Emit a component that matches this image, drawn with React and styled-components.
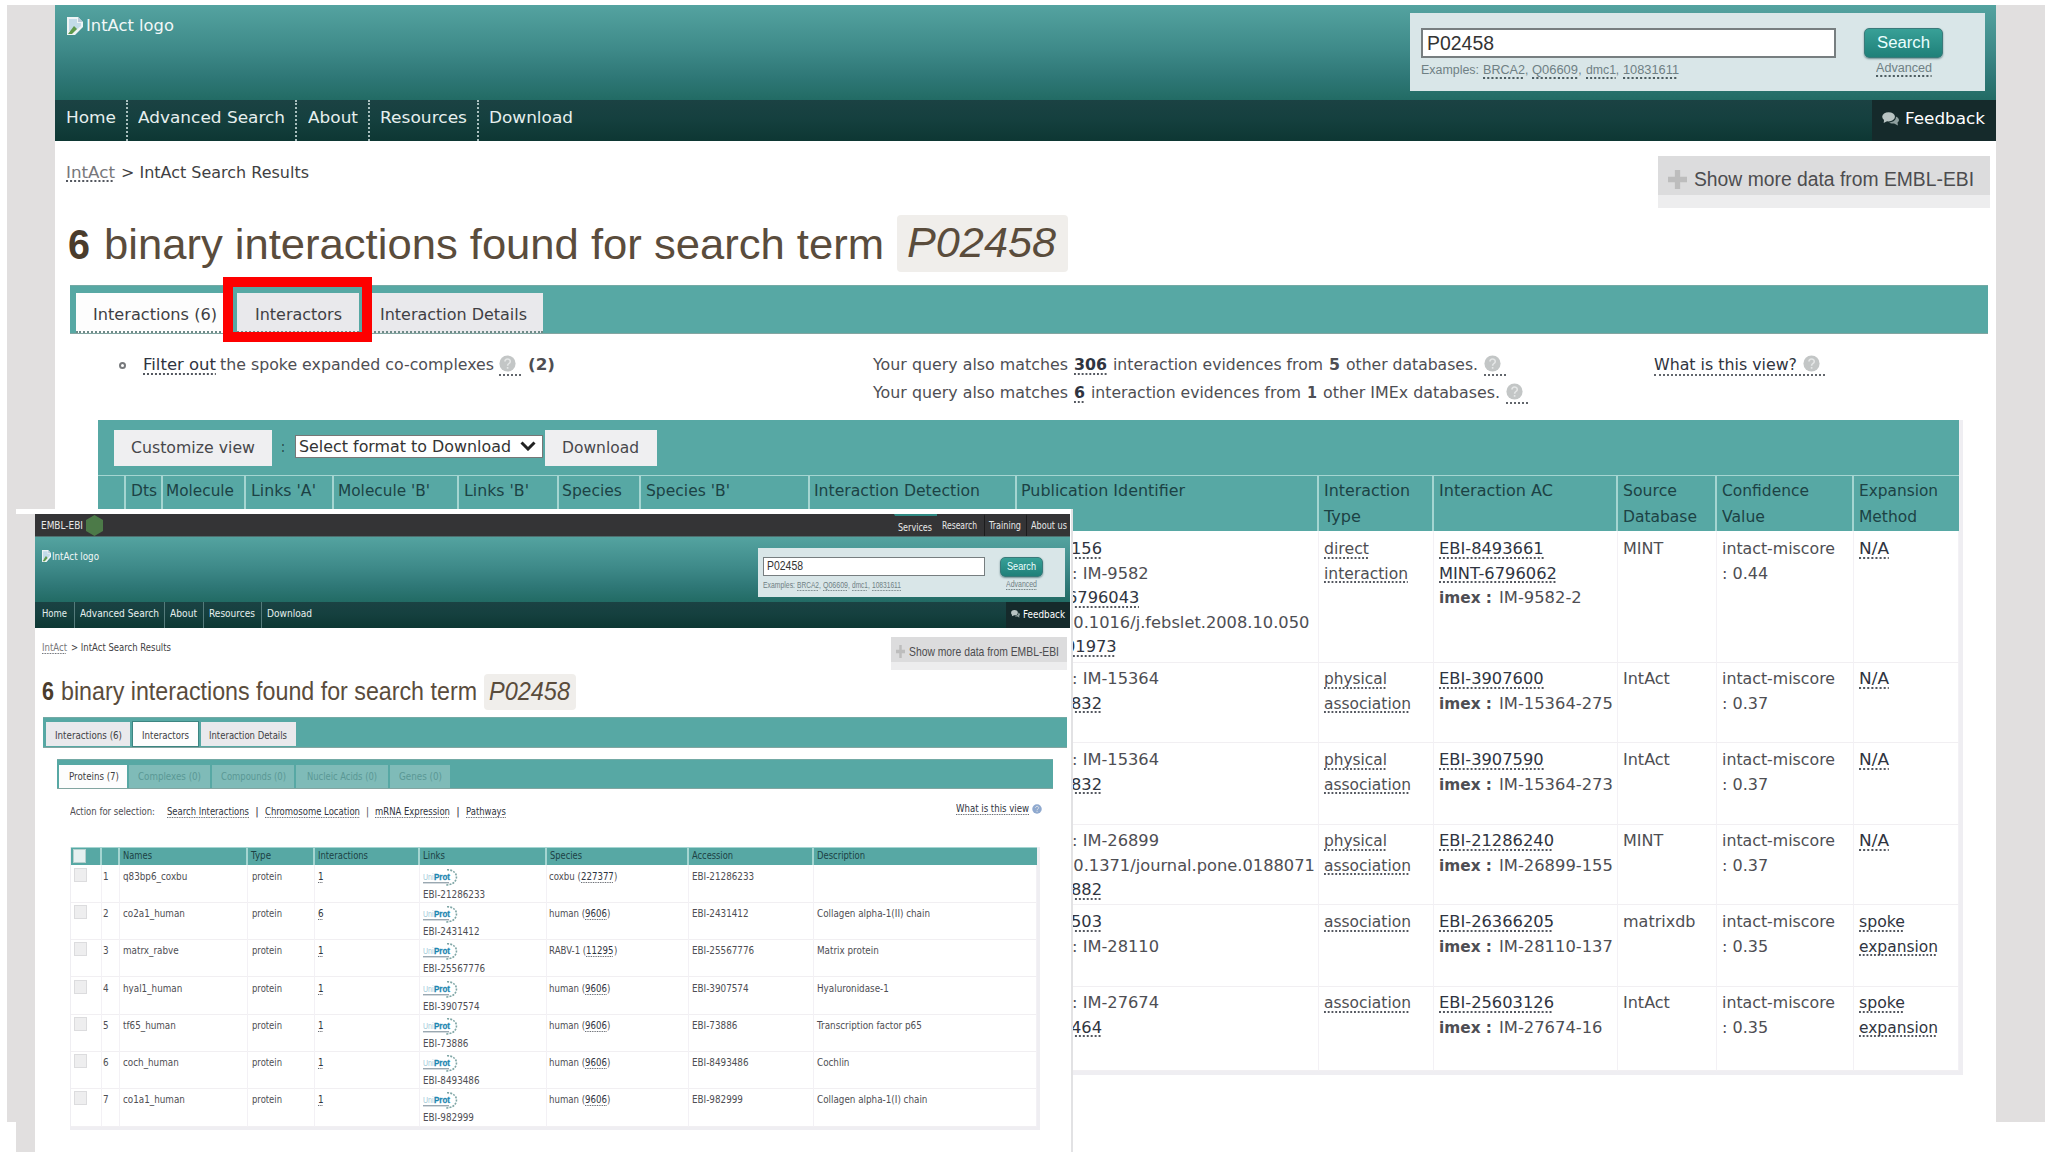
import React, { useLayoutEffect, useRef, useState } from "react";
import styled, { createGlobalStyle, css } from "styled-components";

const GlobalStyle = createGlobalStyle`
  * { box-sizing: border-box; }
  body {
    margin: 0; width: 2048px; height: 1152px; overflow: hidden; background: #fff;
    font-family: "DejaVu Sans", Verdana, sans-serif; color: #4e4e53;
  }
`;

/* ---------- text fitted to a column width ---------- */

const Outer = styled.span`
  display: block;
  flex: none;
  white-space: nowrap;
`;
const Inner = styled.span`
  display: inline-block;
  transform-origin: 0 0;
  white-space: pre;
  vertical-align: top;
  ${(p) => p.$c && css`color: ${p.$c};`}
  ${(p) => p.$b && css`font-weight: bold;`}
  ${(p) => p.$i && css`font-style: italic;`}
  ${(p) => p.$u && css`
    text-decoration: underline dotted ${p.$u};
    text-decoration-thickness: ${p.$thin ? 1 : 2}px;
    text-underline-offset: ${p.$thin ? 2 : 3}px;
    text-decoration-skip-ink: none;
  `}
`;

function T({ w, s = 1, c, b, i, u, thin, children }) {
  const ref = useRef(null);
  const [fit, setFit] = useState(null);
  useLayoutEffect(() => {
    const el = ref.current;
    const prev = el.style.transform;
    el.style.transform = "none";
    const natural = el.getBoundingClientRect().width;
    el.style.transform = prev;
    const k = w ? w / natural : s;
    setFit({ k, width: natural * k });
  }, [w, s, children]);
  return (
    <Outer style={fit ? { width: fit.width } : undefined}>
      <Inner ref={ref} $c={c} $b={b} $i={i} $u={u} $thin={thin}
        style={fit ? { transform: `scaleX(${fit.k})` } : undefined}>
        {children}
      </Inner>
    </Outer>
  );
}

/* ---------- icons ---------- */

const Glyph = styled.svg`
  display: block;
  flex: none;
  width: ${(p) => p.$w}px;
  height: ${(p) => p.$h}px;
`;
const BrokenImage = ({ w, h }) => (
  <Glyph $w={w} $h={h} viewBox="0 0 16 18" preserveAspectRatio="none">
    <path d="M0 0H11L16 5V10L8 18H0Z" fill="#eef4f5" />
    <path d="M2 2H10V6H14V9L8 14H2Z" fill="#c3dbe9" />
    <path d="M1 17L7 9L10 12L5 17Z" fill="#5f9a4c" />
    <path d="M11 0V5H16Z" fill="#b9c9d8" />
  </Glyph>
);
const Help = ({ size, blue }) => (
  <Glyph $w={size} $h={size} viewBox="0 0 16 16">
    <circle cx="8" cy="8" r="7.6" fill={blue ? "#8fa9cf" : "#c3c6c6"} />
    <path d="M5.6 6.2C5.6 3 10.6 3 10.6 6C10.6 8 8.1 8 8.1 10M8.1 11.4V13" fill="none" stroke="#e4e6e6" strokeWidth="1.5" />
  </Glyph>
);
const Bubbles = ({ w, h }) => (
  <Glyph $w={w} $h={h} viewBox="0 0 16 14" preserveAspectRatio="none">
    <ellipse cx="6.2" cy="4.8" rx="6" ry="4.6" fill="#b8c4c3" />
    <path d="M2 7L1.6 11L6 8.6Z" fill="#b8c4c3" />
    <path d="M13 4.4C17.4 6.5 16 9.6 14.6 10.4L15 13.6L11.4 11.4C9 11.6 7.4 11 6.8 10.4C11 10.2 13.6 7.6 13 4.4Z" fill="#8fa09f" />
  </Glyph>
);
const Plus = ({ w, h }) => (
  <Glyph $w={w} $h={h} viewBox="0 0 18 18" preserveAspectRatio="none">
    <path d="M9 0V18M0 9H18" stroke="#bdbdbd" strokeWidth="5" />
  </Glyph>
);
const UniprotMark = () => (
  <Glyph $w={36} $h={19} viewBox="0 0 36 19">
    <text x="0" y="11" fontSize="8.5" fontFamily="Liberation Sans, sans-serif" fill="#a3cbd9" textLength="10.500" lengthAdjust="spacingAndGlyphs">Uni</text>
    <text x="11" y="11" fontSize="9" fontWeight="bold" fontFamily="Liberation Sans, sans-serif" fill="#1d86b0" stroke="#1d86b0" strokeWidth=".3" textLength="16" lengthAdjust="spacingAndGlyphs">Prot</text>
    <path d="M24 .8C30 .6 35 4.500 33 10.500C31.800 13.500 29 15.800 23 16" fill="none" stroke="#7fa6a6" strokeWidth="1.600" strokeDasharray="2 1.200" />
    <path d="M0 13.800H26" stroke="#6f8490" strokeWidth="1" />
  </Glyph>
);

/* ---------- shared blocks ---------- */

const Line = styled.div`
  display: flex;
  align-items: center;
  gap: ${(p) => p.$gap || 0}px;
  font-size: ${(p) => p.$f || 16.5}px;
  line-height: ${(p) => p.$lh || 24.5}px;
  height: ${(p) => p.$h || p.$lh || 24.5}px;
  padding-left: ${(p) => p.$pl || 0}px;
`;
const Pair = styled.span`display: flex;`;
const HelpLink = styled.span`
  display: flex;
  align-items: flex-start;
  gap: 6px;
  width: ${(p) => p.$w}px;
  height: 21px;
  line-height: 20px;
  border-bottom: 2px dotted #62666c;
`;
const Header = styled.div`
  display: flex;
  justify-content: space-between;
  align-items: flex-start;
  height: ${(p) => p.$h}px;
  padding: ${(p) => p.$pad};
  background: linear-gradient(#54a3a0, #3f8b8a 45%, #2f7877 75%, #226b64);
  color: #f2f8f8;
`;
const NavBar = styled.div`
  display: flex;
  justify-content: space-between;
  height: ${(p) => p.$h}px;
  color: #e6efee;
  background: linear-gradient(#1b4243, #15403f 45%, #0d3733);
  font-size: ${(p) => p.$f}px;
  line-height: ${(p) => p.$lh}px;
`;
const NavItems = styled.div`display: flex;`;
const NavItem = styled.div`
  width: ${(p) => p.$w}px;
  padding-left: ${(p) => p.$pl}px;
  border-right: ${(p) => (p.$last ? "0" : p.$small ? "1px solid #557b7b" : "2px dotted #a9bfbe")};
`;
const Feedback = styled.div`
  display: flex;
  align-items: center;
  gap: ${(p) => p.$gap}px;
  width: ${(p) => p.$w}px;
  background: #152a2b;
  padding: 0 0 ${(p) => p.$pb}px ${(p) => p.$pl}px;
  color: #fff;
`;
const SearchPanel = styled.div`
  display: flex;
  gap: ${(p) => p.$gap}px;
  width: ${(p) => p.$w}px;
  height: ${(p) => p.$h}px;
  padding: ${(p) => p.$pad};
  background: #d9e6e8;
  color: #6f8084;
  font-family: "Liberation Sans", Arial, sans-serif;
`;
const Field = styled.div`
  width: ${(p) => p.$w}px;
  height: ${(p) => p.$h}px;
  border: ${(p) => p.$bw}px solid #777e80;
  background: #fff;
  color: #333;
  padding-left: ${(p) => p.$pl}px;
  font-size: ${(p) => p.$f}px;
  line-height: ${(p) => p.$h - 2 * p.$bw}px;
`;
const SearchSide = styled.div`
  display: flex;
  flex-direction: column;
  align-items: center;
  width: ${(p) => p.$w}px;
`;
const SearchButton = styled.div`
  display: flex;
  justify-content: center;
  width: 100%;
  height: ${(p) => p.$h}px;
  line-height: ${(p) => p.$h - 3}px;
  font-size: ${(p) => p.$f}px;
  color: #eaffff;
  border: 1px solid #3a7a7a;
  border-radius: 5px;
  background: linear-gradient(#38a097, #1f8079);
  box-shadow: 0 1px 2px #6f8f92;
`;
const Between = styled.div`
  display: flex;
  justify-content: space-between;
  align-items: flex-start;
  height: ${(p) => p.$h}px;
  padding: ${(p) => p.$pad};
`;
const MoreData = styled.div`
  display: flex;
  align-items: center;
  gap: ${(p) => p.$gap}px;
  width: ${(p) => p.$w}px;
  height: ${(p) => p.$h}px;
  padding: 0 0 ${(p) => p.$pb}px ${(p) => p.$pl}px;
  background: linear-gradient(#dcdcdd 75%, #ededee 75%);
  color: #4c4c4f;
  font-family: "Liberation Sans", Arial, sans-serif;
  font-size: ${(p) => p.$f}px;
`;
const Title = styled.div`
  display: flex;
  align-items: center;
  gap: ${(p) => p.$gap}px;
  height: ${(p) => p.$h}px;
  padding: 0 0 ${(p) => p.$pb}px ${(p) => p.$pl}px;
  font-family: "Liberation Sans", Arial, sans-serif;
  font-size: ${(p) => p.$f}px;
  line-height: 1.2;
  color: #5a4c3c;
`;
const Heading = styled.div`
  display: flex;
  gap: ${(p) => p.$gap}px;
  padding-top: ${(p) => p.$pt || 0}px;
`;
const Term = styled.div`
  width: ${(p) => p.$w}px;
  height: ${(p) => p.$h}px;
  padding-left: ${(p) => p.$pl}px;
  line-height: ${(p) => p.$h - 1}px;
  border-radius: 4px;
  background: #f0eeeb;
`;
const TabStrip = styled.div`
  display: flex;
  align-items: flex-start;
  gap: ${(p) => p.$gap}px;
  position: relative;
  width: ${(p) => p.$w}px;
  height: ${(p) => p.$h}px;
  padding: ${(p) => p.$pad};
  background: #57a8a4;
  border-top: 1px solid #74aaa5;
  border-bottom: 1px solid #83a5a1;
  font-size: ${(p) => p.$f}px;
`;
const Indent = styled.div`padding: ${(p) => p.$pad};`;
const Tab = styled.div`
  display: flex;
  width: ${(p) => p.$w}px;
  height: ${(p) => p.$h}px;
  padding-left: ${(p) => p.$pl}px;
  line-height: ${(p) => p.$lh}px;
  background: ${(p) => (p.$on ? "#fdfdfd" : p.$off ? "#7fbbb8" : "#e9e9ec")};
  color: ${(p) => (p.$off ? "#5a9895" : "#3f3f44")};
  ${(p) => p.$dots && css`border-bottom: 2px dotted #6f8a88;`}
  ${(p) => p.$frame && css`outline: 1.5px solid #3c8581;`}
`;
const Highlight = styled.div`
  position: absolute;
  left: 153px;
  top: -9px;
  width: 149px;
  height: 65px;
  border: 10px solid #fe0000;
`;

/* ---------- large results page ---------- */

const Stage = styled.div`
  position: relative;
  width: 2048px;
  height: 1152px;
  padding: 5px 3px 0 7px;
  display: flex;
  align-items: flex-start;
  overflow: hidden;
`;
const Margin = styled.div`
  flex: none;
  width: ${(p) => p.$w}px;
  height: ${(p) => p.$h}px;
  background: #e1dfdf;
`;
const Page = styled.div`flex: none; width: 1941px;`;
const Info = styled.div`
  display: grid;
  grid-template-columns: 818px 781px 1fr;
  height: 86px;
  padding-top: 17px;
`;
const Bullet = styled.span`
  width: 7px;
  height: 7px;
  border: 2px solid #77797c;
  border-radius: 50%;
`;
const FilterLine = styled.div`
  display: grid;
  grid-template-columns: 24px 77px 279px 29px auto;
  align-items: center;
  justify-content: start;
  height: 28px;
  padding-left: 64px;
  font-size: 16.5px;
  line-height: 28px;
`;
const Results = styled.div`
  width: 1865px;
  border-right: 4px solid #efeef2;
  border-bottom: 4px solid #efeef2;
`;
const Toolbar = styled.div`
  display: flex;
  align-items: flex-start;
  height: 55px;
  padding: 10px 0 0 16px;
  background: #57a8a4;
  font-size: 16.5px;
`;
const ToolButton = styled.div`
  width: ${(p) => p.$w}px;
  height: 36px;
  padding-left: 17px;
  line-height: 36px;
  background: #efeff1;
  color: #47474b;
`;
const SelectSlot = styled.div`
  display: flex;
  align-items: center;
  gap: 10px;
  padding: 0 2px 4px 9px;
  height: 36px;
  color: #244;
`;
const Select = styled.div`
  display: flex;
  align-items: center;
  gap: 9px;
  width: 248px;
  height: 23px;
  padding-left: 3px;
  border: 1px solid #777;
  background: #fff;
  color: #333;
  line-height: 21px;
`;
const Grid = styled.div`
  display: grid;
  grid-template-columns: ${(p) => p.$cols};
  height: ${(p) => p.$h}px;
`;
const HeadCell = styled.div`
  background: #57a8a4;
  color: #1c4244;
  padding: ${(p) => p.$pad};
  font-size: ${(p) => p.$f}px;
  line-height: ${(p) => p.$lh}px;
  border-right: 2px solid #a5d5d1;
  border-top: 1px solid #a5d5d1;
  &:last-child { border-right: 0; }
`;
const Cell = styled.div`
  min-width: 0;
  padding: ${(p) => p.$pad};
  font-size: ${(p) => p.$f}px;
  line-height: ${(p) => p.$lh}px;
  border-right: 1px solid #f3f1f5;
  border-bottom: 1px solid #f1eff2;
`;
const PubLine = styled.div`
  display: flex;
  justify-content: flex-end;
  width: ${(p) => p.$w}px;
`;

const INK = "#2f3440";
const U = "#53575f";
const MAIN_COLS = "28px 37px 83px 88px 125px 100px 82px 169px 207px 302px 115px 184px 99px 137px 105px";
const HEADS = [
  [], [["Dts", 26]], [["Molecule", 68]], [["Links 'A'", 65]], [["Molecule 'B'", 92]], [["Links 'B'", 65]],
  [["Species", 60]], [["Species 'B'", 84]], [["Interaction Detection", 166]], [["Publication Identifier", 164]],
  [["Interaction", 86], ["Type", 37]], [["Interaction AC", 114]], [["Source", 54], ["Database", 74]],
  [["Confidence", 87], ["Value", 43]], [["Expansion", 79], ["Method", 58]],
];
const HEAD_PAD = { 2: 3, 4: 4, 6: 3, 8: 4, 9: 4 };
const RESULTS = [
  { h: 132, pt: 6, pub: [["156", 80, 1], [": IM-9582", 127], ["6796043", 118, 1], ["10.1016/j.febslet.2008.10.050", 288], ["01973", 95, 1]],
    type: ["direct", "interaction"], ac: ["EBI-8493661", "MINT-6796062"], imex: "IM-9582-2", src: "MINT", score: "0.44", exp: ["N/A"] },
  { h: 80, pt: 4, pub: [[": IM-15364", 137], ["832", 80, 1]],
    type: ["physical", "association"], ac: ["EBI-3907600"], imex: "IM-15364-275", src: "IntAct", score: "0.37", exp: ["N/A"] },
  { h: 82, pt: 5, pub: [[": IM-15364", 137], ["832", 80, 1]],
    type: ["physical", "association"], ac: ["EBI-3907590"], imex: "IM-15364-273", src: "IntAct", score: "0.37", exp: ["N/A"] },
  { h: 80, pt: 4, pub: [[": IM-26899", 137], ["10.1371/journal.pone.0188071", 293], ["882", 80, 1]],
    type: ["physical", "association"], ac: ["EBI-21286240"], imex: "IM-26899-155", src: "MINT", score: "0.37", exp: ["N/A"] },
  { h: 82, pt: 5, pub: [["503", 80, 1], [": IM-28110", 137]],
    type: ["association"], ac: ["EBI-26366205"], imex: "IM-28110-137", src: "matrixdb", score: "0.35", exp: ["spoke", "expansion"] },
  { h: 84, pt: 4, pub: [[": IM-27674", 137], ["464", 80, 1]],
    type: ["association"], ac: ["EBI-25603126"], imex: "IM-27674-16", src: "IntAct", score: "0.35", exp: ["spoke", "expansion"] },
];
const TYPE_W = { direct: 45, interaction: 84, physical: 63, association: 87 };
const EXP_W = { "N/A": 30, spoke: 46, expansion: 79 };

function ResultRow({ r }) {
  const cell = { $pad: `${r.pt}px 0 0 4.6px`, $f: 16.5, $lh: 24.5 };
  return (
    <Grid $cols={MAIN_COLS} $h={r.h}>
      {Array.from({ length: 9 }, (_, n) => <Cell key={n} {...cell} />)}
      <Cell {...cell}>
        {r.pub.map(([t, w, link]) => (
          <PubLine key={t} $w={w}><T c={link ? INK : undefined} u={link ? U : undefined} s={0.985}>{t}</T></PubLine>
        ))}
      </Cell>
      <Cell {...cell}>{r.type.map((t) => <T key={t} w={TYPE_W[t]} u={U}>{t}</T>)}</Cell>
      <Cell {...cell}>
        {r.ac.map((t) => <T key={t} s={0.987} c={INK} u={U}>{t}</T>)}
        <Line $gap={7}><T b w={53}>imex :</T><T s={0.99}>{r.imex}</T></Line>
      </Cell>
      <Cell {...cell}><T s={0.97}>{r.src}</T></Cell>
      <Cell {...cell}><T w={113}>intact-miscore</T><T s={0.97}>{": " + r.score}</T></Cell>
      <Cell {...cell}>{r.exp.map((t) => <T key={t} w={EXP_W[t]} c={INK} u={U}>{t}</T>)}</Cell>
    </Grid>
  );
}

function ResultsPage() {
  return (
    <Page>
      <Header $h={95} $pad="8px 11px 0 12px">
        <Line $f={16.5} $lh={25} $gap={3}><BrokenImage w={16} h={18} /><T w={88}>IntAct logo</T></Line>
        <SearchPanel $w={575} $h={78} $pad="15px 0 0 11px" $gap={28}>
          <div>
            <Field $w={415} $h={30} $bw={2} $pl={4} $f={20}><T w={67}>P02458</T></Field>
            <Line $f={12} $lh={25} $gap={4}>
              <T w={58}>Examples:</T>
              <Pair><T w={42} u="#4e5d61">BRCA2</T><T>,</T></Pair>
              <Pair><T w={46} u="#4e5d61">Q06609</T><T>,</T></Pair>
              <Pair><T w={30} u="#4e5d61">dmc1</T><T>,</T></Pair>
              <T w={56} u="#4e5d61">10831611</T>
            </Line>
          </div>
          <SearchSide $w={79}>
            <SearchButton $h={30} $f={16}><T w={53}>Search</T></SearchButton>
            <Line $f={12} $lh={21}><T w={56} u="#4e5d61">Advanced</T></Line>
          </SearchSide>
        </SearchPanel>
      </Header>
      <NavBar $h={41} $f={16.5} $lh={35}>
        <NavItems>
          <NavItem $w={73} $pl={11}><T w={50}>Home</T></NavItem>
          <NavItem $w={169} $pl={10}><T w={147}>Advanced Search</T></NavItem>
          <NavItem $w={73} $pl={11}><T w={50}>About</T></NavItem>
          <NavItem $w={109} $pl={10}><T w={87}>Resources</T></NavItem>
          <NavItem $w={120} $pl={10} $last><T w={84}>Download</T></NavItem>
        </NavItems>
        <Feedback $w={124} $pl={10} $gap={6} $pb={4}><Bubbles w={17} h={14} /><T w={80}>Feedback</T></Feedback>
      </NavBar>
      <Between $h={67} $pad="15px 6px 0 11px">
        <Line $h={34} $gap={6}>
          <T w={49} c="#77777b" u={U}>IntAct</T><T w={188} c="#3f3f43">{"> IntAct Search Results"}</T>
        </Line>
        <MoreData $w={332} $h={52} $pl={10} $pb={5} $f={20} $gap={7}>
          <Plus w={19} h={19} /><T w={280}>Show more data from EMBL-EBI</T>
        </MoreData>
      </Between>
      <Title $h={77} $pl={13} $pb={6} $f={42} $gap={13}>
        <Heading $gap={14} $pt={4}><T b w={22} c="#4a3c2c">6</T><T w={780}>binary interactions found for search term</T></Heading>
        <Term $w={171} $h={57} $pl={10}><T i w={149}>P02458</T></Term>
      </Title>
      <Indent $pad="0 0 0 15px">
        <TabStrip $w={1918} $h={49} $pad="7px 0 0 6px" $f={16.5} $gap={4}>
          <Tab $on $dots $w={157} $h={40} $pl={17} $lh={43}><T w={124}>Interactions (6)</T></Tab>
          <Tab $dots $w={122} $h={40} $pl={18} $lh={43}><T w={87}>Interactors</T></Tab>
          <Tab $dots $w={180} $h={40} $pl={17} $lh={43}><T w={147}>Interaction Details</T></Tab>
          <Highlight />
        </TabStrip>
      </Indent>
      <Info>
        <FilterLine>
          <Bullet /><T w={73} c={INK} u={U}>Filter out</T><T w={274}>the spoke expanded co-complexes</T>
          <HelpLink $w={22}><Help size={17} /></HelpLink><T w={27} b>(2)</T>
        </FilterLine>
        <div>
          <Line $lh={28} $gap={6}>
            <T w={195}>Your query also matches</T><T w={33} b c={INK} u={U}>306</T>
            <T w={210}>interaction evidences from</T><T w={11} b>5</T><T w={132}>other databases.</T>
            <HelpLink $w={22}><Help size={17} /></HelpLink>
          </Line>
          <Line $lh={28} $gap={6}>
            <T w={195}>Your query also matches</T><T w={11} b c={INK} u={U}>6</T>
            <T w={210}>interaction evidences from</T><T w={10} b>1</T><T w={177}>other IMEx databases.</T>
            <HelpLink $w={22}><Help size={17} /></HelpLink>
          </Line>
        </div>
        <Line $lh={28}><HelpLink $w={171}><T w={143} c={INK}>What is this view?</T><Help size={17} /></HelpLink></Line>
      </Info>
      <Indent $pad="0 0 0 43px">
        <Results>
          <Toolbar>
            <ToolButton $w={158}><T w={124}>Customize view</T></ToolButton>
            <SelectSlot>
              <T w={4}>:</T>
              <Select>
                <T w={212}>Select format to Download</T>
                <Glyph $w={16} $h={10} viewBox="0 0 16 10"><path d="M1.500 1.500L8 8L14.500 1.500" fill="none" stroke="#222" strokeWidth="3" /></Glyph>
              </Select>
            </SelectSlot>
            <ToolButton $w={112}><T w={77}>Download</T></ToolButton>
          </Toolbar>
          <Grid $cols={MAIN_COLS} $h={56}>
            {HEADS.map((h, n) => (
              <HeadCell key={n} $pad={`2px 0 0 ${HEAD_PAD[n] || 4.6}px`} $f={16.5} $lh={26}>
                {h.map(([t, w]) => <T key={t} w={w}>{t}</T>)}
              </HeadCell>
            ))}
          </Grid>
          {RESULTS.map((r) => <ResultRow key={r.imex} r={r} />)}
        </Results>
      </Indent>
    </Page>
  );
}

/* ---------- smaller window over the page ---------- */

const Window = styled.div`
  position: absolute;
  left: 16px;
  top: 509px;
  width: 1057px;
  height: 643px;
  padding-top: 5px;
  display: flex;
  background: #fff;
  border-right: 2px solid #e2e2e4;
  overflow: hidden;
`;
const SmallPage = styled.div`flex: none; width: 1035px;`;
const TopBar = styled.div`
  display: flex;
  justify-content: space-between;
  height: 23px;
  background: #343436;
  border-bottom: 1px solid #4f6f6f;
  color: #e8e8e8;
  font-size: 10.5px;
  line-height: 22px;
`;
const TopLinks = styled.div`display: flex; padding-right: 3px;`;
const TopLink = styled.div`
  width: ${(p) => p.$w}px;
  padding: ${(p) => (p.$on ? "2px 0 0 3px" : "0 0 0 4px")};
  border-top: 2px solid ${(p) => (p.$on ? "#2f8a83" : "transparent")};
  border-left: 1px solid ${(p) => (p.$sep ? "#1c1c1d" : "transparent")};
  line-height: 18px;
`;
const Actions = styled.div`
  display: flex;
  justify-content: space-between;
  align-items: flex-start;
  height: 58px;
  padding: 14px 28px 0 35px;
`;
const ActionLinks = styled.div`
  display: flex;
  gap: 6px;
  font-size: 10px;
  line-height: 18px;
`;
const ActionLabel = styled.div`padding-right: 6px;`;
const Proteins = styled.div`
  width: 970px;
  border-left: 1px solid #efeef2;
  border-right: 3px solid #efeef2;
  border-bottom: 3px solid #efeef2;
`;
const Check = styled.div`
  width: 13px;
  height: 14px;
  background: ${(p) => (p.$head ? "#e6f0f0" : "#eeeeef")};
  border: 1px solid ${(p) => (p.$head ? "#b5cfcd" : "#dcdcde")};
`;

const SMALL_COLS = "31px 18px 128px 67px 105px 127px 142px 125px 223px";
const SMALL_HEADS = [["Names", 29], ["Type", 20], ["Interactions", 50], ["Links", 22], ["Species", 32], ["Accession", 41], ["Description", 48]];
const PROTEINS = [
  ["q83bp6_coxbu", 1, "EBI-21286233", "coxbu", "227377", "", 37],
  ["co2a1_human", 6, "EBI-2431412", "human", "9606", "Collagen alpha-1(II) chain", 37],
  ["matrx_rabve", 1, "EBI-25567776", "RABV-1", "11295", "Matrix protein", 38],
  ["hyal1_human", 1, "EBI-3907574", "human", "9606", "Hyaluronidase-1", 37],
  ["tf65_human", 1, "EBI-73886", "human", "9606", "Transcription factor p65", 37],
  ["coch_human", 1, "EBI-8493486", "human", "9606", "Cochlin", 37],
  ["co1a1_human", 1, "EBI-982999", "human", "9606", "Collagen alpha-1(I) chain", 39],
];
const SUB_TABS = [["Complexes (0)", 81, 9, 63], ["Compounds (0)", 82, 9, 65], ["Nucleic Acids (0)", 92, 11, 70], ["Genes (0)", 60, 9, 43]];
const K = 0.88;

function ProteinRow({ n, row }) {
  const [name, count, id, sp, tax, desc, h] = row;
  const cell = { $pad: "5px 0 0 3px", $f: 10, $lh: 14 };
  return (
    <Grid $cols={SMALL_COLS} $h={h}>
      <Cell $pad="3px 0 0 3px" $f={10} $lh={14}><Check /></Cell>
      <Cell $pad="5px 0 0 1px" $f={10} $lh={14}><T s={K}>{n}</T></Cell>
      <Cell {...cell}><T s={K}>{name}</T></Cell>
      <Cell $pad="5px 0 0 4px" $f={10} $lh={14}><T w={30}>protein</T></Cell>
      <Cell $pad="5px 0 0 3px" $f={10} $lh={14}><T s={K} c={INK} u={U} thin>{count}</T></Cell>
      <Cell $pad="4px 0 0 3px" $f={10} $lh={14}><UniprotMark /><T s={K}>{id}</T></Cell>
      <Cell $pad="5px 0 0 2px" $f={10} $lh={14}>
        <Line $f={10} $lh={14}><T s={0.86}>{sp + " ("}</T><T s={0.86} c={INK} u={U} thin>{tax}</T><T s={0.86}>)</T></Line>
      </Cell>
      <Cell {...cell}><T s={K}>{id}</T></Cell>
      <Cell {...cell}>{desc && <T s={K}>{desc}</T>}</Cell>
    </Grid>
  );
}

function InteractorsWindow() {
  return (
    <Window>
      <Margin $w={19} $h={640} />
      <SmallPage>
        <TopBar>
          <Line $f={10.5} $lh={22} $pl={6} $gap={3}>
            <T w={42}>EMBL-EBI</T>
            <Glyph $w={17} $h={21} viewBox="0 0 17 21"><path d="M8.500 0L17 5V16L8.500 21L0 16V5Z" fill="#4c7a48" /></Glyph>
          </Line>
          <TopLinks>
            <TopLink $on $w={43}><T w={34}>Services</T></TopLink>
            <TopLink $w={47}><T w={35}>Research</T></TopLink>
            <TopLink $sep $w={42}><T w={32}>Training</T></TopLink>
            <TopLink $sep $w={41}><T w={36}>About us</T></TopLink>
          </TopLinks>
        </TopBar>
        <Header $h={65} $pad="11px 5px 0 7px">
          <Line $f={10.5} $lh={16} $gap={1}><BrokenImage w={9} h={12} /><T w={47}>IntAct logo</T></Line>
          <SearchPanel $w={307} $h={49} $pad="9px 0 0 5px" $gap={15}>
            <div>
              <Field $w={222} $h={19} $bw={1} $pl={3} $f={12.5}><T w={36}>P02458</T></Field>
              <Line $f={8.5} $lh={18} $gap={2}>
                <T w={32}>Examples:</T>
                <Pair><T w={22} u="#5d6d70" thin>BRCA2</T><T s={0.8}>,</T></Pair>
                <Pair><T w={25} u="#5d6d70" thin>Q06609</T><T s={0.8}>,</T></Pair>
                <Pair><T w={16} u="#5d6d70" thin>dmc1</T><T s={0.8}>,</T></Pair>
                <T w={29} u="#5d6d70" thin>10831611</T>
              </Line>
            </div>
            <SearchSide $w={43}>
              <SearchButton $h={20} $f={10}><T w={29}>Search</T></SearchButton>
              <Line $f={8.5} $lh={15}><T w={31} u="#5d6d70" thin>Advanced</T></Line>
            </SearchSide>
          </SearchPanel>
        </Header>
        <NavBar $h={26} $f={10.5} $lh={23}>
          <NavItems>
            <NavItem $small $w={40} $pl={7}><T w={25}>Home</T></NavItem>
            <NavItem $small $w={90} $pl={5}><T w={79}>Advanced Search</T></NavItem>
            <NavItem $small $w={39} $pl={5}><T w={27}>About</T></NavItem>
            <NavItem $small $w={58} $pl={5}><T w={46}>Resources</T></NavItem>
            <NavItem $last $w={60} $pl={5}><T w={45}>Download</T></NavItem>
          </NavItems>
          <Feedback $w={64} $pl={5} $gap={3} $pb={2}><Bubbles w={9} h={8} /><T w={42}>Feedback</T></Feedback>
        </NavBar>
        <Between $h={42} $pad="9px 3px 0 7px">
          <Line $f={10.5} $h={21} $gap={4}>
            <T w={25} c="#77777b" u={U} thin>IntAct</T><T w={100} c="#3f3f43">{"> IntAct Search Results"}</T>
          </Line>
          <MoreData $w={176} $h={33} $pl={5} $pb={4} $f={13} $gap={4}>
            <Plus w={9} h={13} /><T w={150}>Show more data from EMBL-EBI</T>
          </MoreData>
        </Between>
        <Title $h={47} $pl={7} $pb={4} $f={26.5} $gap={7}>
          <Heading $gap={7} $pt={1}><T b w={12} c="#4a3c2c">6</T><T w={416}>binary interactions found for search term</T></Heading>
          <Term $w={92} $h={36} $pl={5}><T i w={81}>P02458</T></Term>
        </Title>
        <Indent $pad="0 0 11px 8px">
          <TabStrip $w={1024} $h={31} $pad="4px 0 0 3px" $f={10.5} $gap={3}>
            <Tab $w={84} $h={24} $pl={9} $lh={27}><T w={67}>Interactions (6)</T></Tab>
            <Tab $on $frame $w={65} $h={24} $pl={9} $lh={27}><T w={47}>Interactors</T></Tab>
            <Tab $w={95} $h={24} $pl={8} $lh={27}><T w={78}>Interaction Details</T></Tab>
          </TabStrip>
        </Indent>
        <Indent $pad="0 0 0 22px">
          <TabStrip $w={996} $h={30} $pad="5px 0 0 2px" $f={10} $gap={2}>
            <Tab $on $w={68} $h={23} $pl={10} $lh={23}><T w={50}>Proteins (7)</T></Tab>
            {SUB_TABS.map(([t, w, pl, tw]) => (
              <Tab key={t} $off $w={w} $h={23} $pl={pl} $lh={23}><T w={tw}>{t}</T></Tab>
            ))}
          </TabStrip>
        </Indent>
        <Actions>
          <ActionLinks>
            <ActionLabel><T w={85}>Action for selection:</T></ActionLabel><T w={82} c={INK} u={U} thin>Search Interactions</T>
            <T w={4}>|</T><T w={95} c={INK} u={U} thin>Chromosome Location</T>
            <T w={3}>|</T><T w={75} c={INK} u={U} thin>mRNA Expression</T>
            <T w={4}>|</T><T w={40} c={INK} u={U} thin>Pathways</T>
          </ActionLinks>
          <Line $f={10} $lh={11} $gap={3}><T w={73} c={INK} u={U} thin>What is this view</T><Help blue size={10} /></Line>
        </Actions>
        <Indent $pad="0 0 0 35px">
          <Proteins>
            <Grid $cols={SMALL_COLS} $h={18}>
              <HeadCell $pad="1px 0 0 2px" $f={10} $lh={16}><Check $head /></HeadCell>
              <HeadCell $f={10} $lh={16} />
              {SMALL_HEADS.map(([t, w]) => (
                <HeadCell key={t} $pad="0 0 0 3px" $f={10} $lh={16}><T w={w}>{t}</T></HeadCell>
              ))}
            </Grid>
            {PROTEINS.map((row, n) => <ProteinRow key={row[0]} n={n + 1} row={row} />)}
          </Proteins>
        </Indent>
      </SmallPage>
    </Window>
  );
}

export default function App() {
  return (
    <>
      <GlobalStyle />
      <Stage>
        <Margin $w={48} $h={1117} />
        <ResultsPage />
        <Margin $w={49} $h={1117} />
        <InteractorsWindow />
      </Stage>
    </>
  );
}
